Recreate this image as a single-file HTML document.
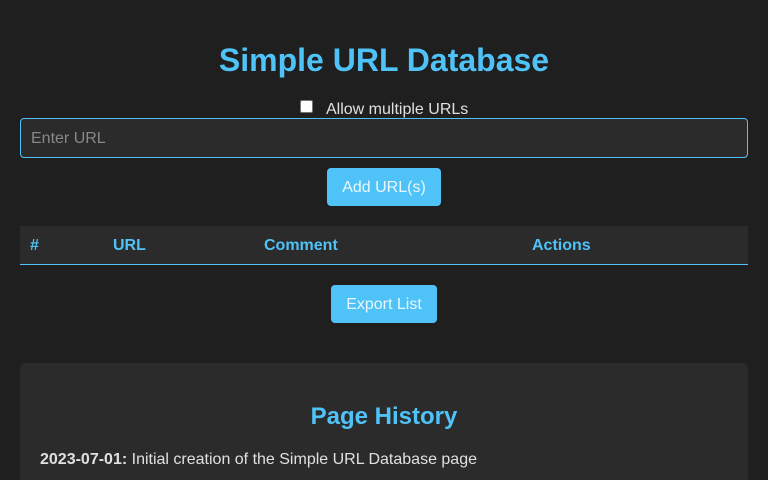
<!DOCTYPE html>
<html><head><style>
html,body{margin:0;background:#1f1f1f;font-family:"Liberation Sans",sans-serif;color:#e0e0e0;width:768px;height:480px;overflow:hidden;position:relative}
h1{position:absolute;top:42px;left:0;width:768px;margin:0;text-align:center;color:#4fc3f7;font-size:32px;font-weight:bold;line-height:36px}
.chk{position:absolute;top:100px;left:300px;width:13px;height:13px;background:#fff;border-radius:2px;border:1px solid #767676;box-sizing:border-box}
.lbl{position:absolute;top:101px;left:326px;font-size:16px;line-height:18px;color:#e0e0e0}
.inp{position:absolute;top:118px;left:20px;width:728px;height:40px;box-sizing:border-box;border:1px solid #4fc3f7;border-radius:4px;background:#2b2b2b;color:#888;font-size:16px;line-height:40px;padding-left:10px}
.btn{position:absolute;background:#4fc3f7;color:#e8f6fd;border-radius:4px;font-size:16px;text-align:center}
.th{position:absolute;top:226px;left:20px;width:728px;height:38px;background:#2b2b2b;border-bottom:1px solid #4fc3f7}
.th span{position:absolute;top:11px;color:#4fc3f7;font-weight:bold;font-size:16px}
.hist{position:absolute;top:363px;left:20px;width:728px;height:117px;background:#2b2b2b;border-radius:6px 6px 0 0}
h2{position:absolute;top:403px;left:0;width:768px;margin:0;text-align:center;color:#4fc3f7;font-size:24px;line-height:28px}
.p{position:absolute;top:451px;left:40px;font-size:16px;line-height:18px}
</style></head><body>
<h1>Simple URL Database</h1>
<div class="chk"></div><div class="lbl">Allow multiple URLs</div>
<div class="inp">Enter URL</div>
<div class="btn" style="top:168px;left:327px;width:114px;height:38px;line-height:40px">Add URL(s)</div>
<div class="th"><span style="left:10px">#</span><span style="left:93px">URL</span><span style="left:244px">Comment</span><span style="left:512px">Actions</span></div>
<div class="btn" style="top:285px;left:331px;width:106px;height:38px;line-height:40px">Export List</div>
<div class="hist"></div>
<h2>Page History</h2>
<div class="p"><b>2023-07-01:</b> Initial creation of the Simple URL Database page</div>
</body></html>
